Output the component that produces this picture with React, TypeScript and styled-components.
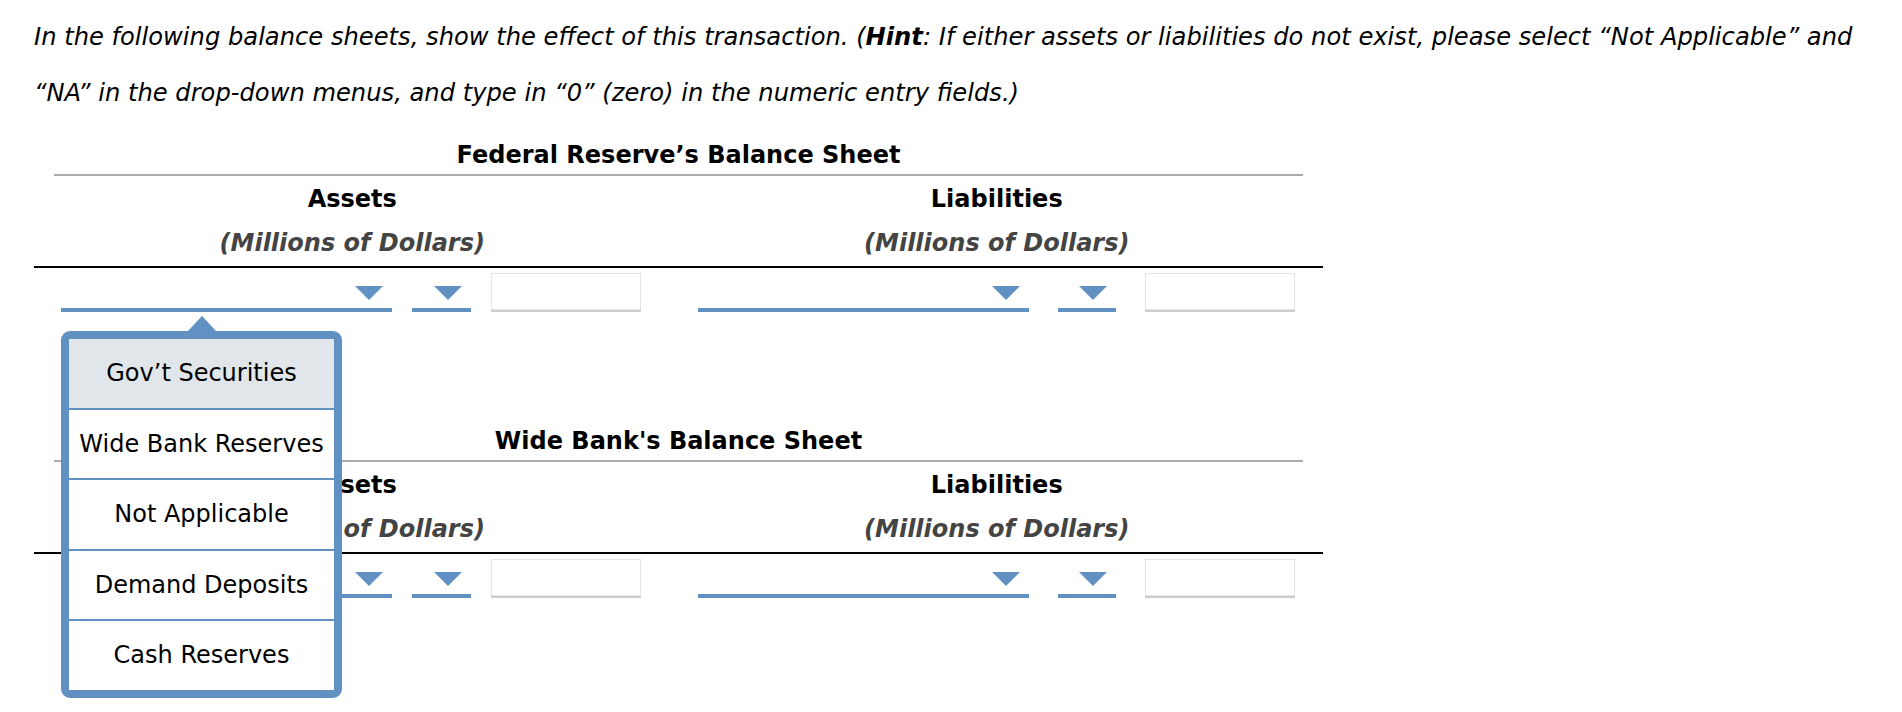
import styled, { createGlobalStyle } from 'styled-components';

const BLUE = '#6190c2';

const GlobalStyle = createGlobalStyle`
  body {
    margin: 0;
    background: #fff;
    color: #000;
    font-family: "DejaVu Sans", Verdana, sans-serif;
  }
`;

const options = [
  'Gov’t Securities',
  'Wide Bank Reserves',
  'Not Applicable',
  'Demand Deposits',
  'Cash Reserves',
];

const sheets = [
  { title: 'Federal Reserve’s Balance Sheet', open: true },
  { title: "Wide Bank's Balance Sheet", open: false },
];

const DropMenu = () => (
  <StMenu>
    {options.map((opt, i) => (
      <StMenuItem key={opt} $active={i === 0}>{opt}</StMenuItem>
    ))}
  </StMenu>
);

const Sheet = ({ title, open }: { title: string; open: boolean }) => (
  <StSheet>
    <StSheetTitle>{title}</StSheetTitle>
    <StHeadGrid>
      <StHeadCell>
        <StColTitle>Assets</StColTitle>
        <StColUnit>(Millions of Dollars)</StColUnit>
      </StHeadCell>
      <StHeadCell>
        <StColTitle>Liabilities</StColTitle>
        <StColUnit>(Millions of Dollars)</StColUnit>
      </StHeadCell>
    </StHeadGrid>
    <StEntryGrid>
      <StEntryCell $pad={27} $gap={20}>
        <StSelect $w={331}>
          <StArrow />
          {open && <DropMenu />}
        </StSelect>
        <StSelect $w={59}>
          <StArrow />
        </StSelect>
        <StNumber />
      </StEntryCell>
      <StEntryCell $pad={19} $gap={29}>
        <StSelect $w={331}>
          <StArrow />
        </StSelect>
        <StSelect $w={58}>
          <StArrow />
        </StSelect>
        <StNumber />
      </StEntryCell>
    </StEntryGrid>
  </StSheet>
);

const App = () => {
  return (
    <StPage>
      <GlobalStyle />
      <StHint>
        In the following balance sheets, show the effect of this transaction. (<b>Hint</b>: If either
        assets or liabilities do not exist, please select “Not Applicable” and
        <br />
        “NA” in the drop-down menus, and type in “0” (zero) in the numeric entry fields.)
      </StHint>
      <StSheets>
        {sheets.map(s => (
          <Sheet key={s.title} title={s.title} open={s.open} />
        ))}
      </StSheets>
    </StPage>
  );
};

export default App;

const StPage = styled.div`
  padding: 9px 0 0 34px;
  width: 1902px;
  height: 712px;
  box-sizing: border-box;
  overflow: hidden;
`;

const StHint = styled.p`
  margin: 0;
  font-size: 24.2px;
  line-height: 56px;
  font-style: italic;
  white-space: nowrap;
  b {
    font-weight: bold;
  }
`;

const StSheets = styled.div`
  display: flex;
  flex-direction: column;
  gap: 114px;
  margin-top: 19px;
`;

const StSheet = styled.div`
  width: 1289px;
`;

const StSheetTitle = styled.div`
  margin: 0 20px;
  padding-bottom: 4px;
  border-bottom: 2px solid #aaa;
  font-size: 24px;
  line-height: 30px;
  font-weight: bold;
  text-align: center;
`;

const StHeadGrid = styled.div`
  display: grid;
  grid-template-columns: 1fr 1fr;
  border-bottom: 2px solid #000;
`;

const StHeadCell = styled.div`
  padding-right: 8px;
  text-align: center;
  font-size: 24px;
  font-weight: bold;
`;

const StColTitle = styled.div`
  line-height: 46px;
`;

const StColUnit = styled.div`
  line-height: 42px;
  padding-bottom: 2px;
  font-style: italic;
  color: #444;
`;

const StEntryGrid = styled.div`
  display: grid;
  grid-template-columns: 1fr 1fr;
  padding-top: 5px;
`;

const StEntryCell = styled.div<{ $pad: number; $gap: number }>`
  display: flex;
  align-items: flex-end;
  padding-left: ${p => p.$pad}px;
  gap: ${p => p.$gap}px;
`;

const StSelect = styled.div<{ $w: number }>`
  position: relative;
  width: ${p => p.$w}px;
  height: 39px;
  box-sizing: border-box;
  display: flex;
  align-items: flex-end;
  justify-content: flex-end;
  padding: 0 9px 8px 0;
  border-bottom: 4px solid ${BLUE};
`;

const StArrow = styled.span`
  width: 0;
  height: 0;
  border-left: 14px solid transparent;
  border-right: 14px solid transparent;
  border-top: 14px solid ${BLUE};
`;

const StNumber = styled.div`
  width: 150px;
  height: 37px;
  box-sizing: border-box;
  margin-bottom: 2px;
  border: 1px solid #e4e4e4;
  box-shadow: 0 2px 0 #cdcdcd;
  background: #fff;
`;

const StMenu = styled.div`
  position: absolute;
  top: calc(100% + 23px);
  left: 0;
  z-index: 10;
  width: 281px;
  box-sizing: border-box;
  border: 8px solid ${BLUE};
  border-radius: 9px;
  background: #fff;
  &::before {
    content: '';
    position: absolute;
    top: -23px;
    left: 50%;
    transform: translateX(-50%);
    border-left: 14px solid transparent;
    border-right: 14px solid transparent;
    border-bottom: 15px solid ${BLUE};
  }
`;

const StMenuItem = styled.div<{ $active: boolean }>`
  height: 68.5px;
  display: flex;
  align-items: center;
  justify-content: center;
  font-size: 24px;
  color: #000;
  background: ${p => (p.$active ? '#e0e6e9' : '#fff')};
  & + & {
    border-top: 2px solid ${BLUE};
  }
`;
